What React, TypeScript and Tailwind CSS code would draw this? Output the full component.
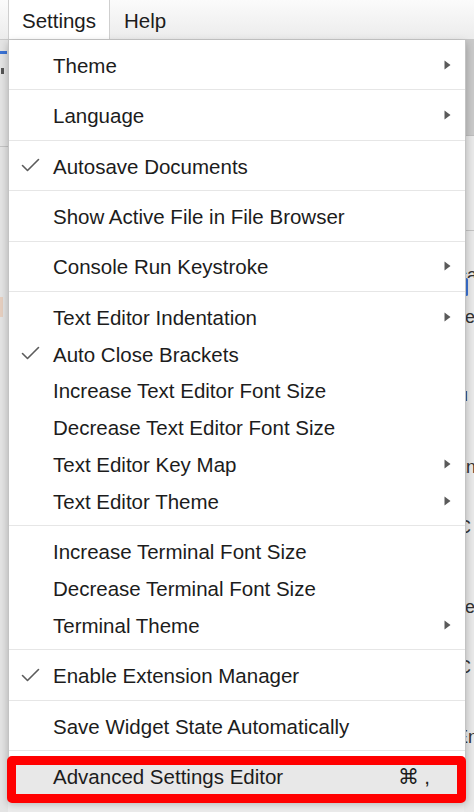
import React from "react";

type Item = { label: string; checked?: boolean; submenu?: boolean; shortcut?: string; active?: boolean };

const sections: Item[][] = [
  [{ label: "Theme", submenu: true }],
  [{ label: "Language", submenu: true }],
  [{ label: "Autosave Documents", checked: true }],
  [{ label: "Show Active File in File Browser" }],
  [{ label: "Console Run Keystroke", submenu: true }],
  [
    { label: "Text Editor Indentation", submenu: true },
    { label: "Auto Close Brackets", checked: true },
    { label: "Increase Text Editor Font Size" },
    { label: "Decrease Text Editor Font Size" },
    { label: "Text Editor Key Map", submenu: true },
    { label: "Text Editor Theme", submenu: true },
  ],
  [
    { label: "Increase Terminal Font Size" },
    { label: "Decrease Terminal Font Size" },
    { label: "Terminal Theme", submenu: true },
  ],
  [{ label: "Enable Extension Manager", checked: true }],
  [{ label: "Save Widget State Automatically" }],
  [{ label: "Advanced Settings Editor", shortcut: "⌘ ,", active: true }],
];

function Check() {
  return (
    <svg width="19" height="14" viewBox="0 0 19 14" className="absolute left-[12px] top-1/2 -translate-y-1/2">
      <path d="M1.5 7.5 L6.5 12.5 L17.5 1.5" fill="none" stroke="#5c5c5c" strokeWidth="1.6" strokeLinecap="round" strokeLinejoin="round" />
    </svg>
  );
}

function Arrow() {
  return (
    <svg width="7" height="10" viewBox="0 0 7 10" className="absolute left-[435px] top-1/2 -translate-y-1/2">
      <path d="M0.5 0.5 L6.5 5 L0.5 9.5 Z" fill="#5a5a5a" />
    </svg>
  );
}

function MenuRow({ item }: { item: Item }) {
  return (
    <div className={`relative flex h-[36.8px] items-center pl-[44px] pr-[35px] pt-[3px] ${item.active ? "bg-[#e8e8e8]" : ""}`}>
      {item.checked && <Check />}
      <span className="flex-1 whitespace-nowrap">{item.label}</span>
      {item.shortcut && <span className="whitespace-nowrap">{item.shortcut}</span>}
      {item.submenu && <Arrow />}
    </div>
  );
}

export default function App() {
  return (
    <div
      className="relative h-[812px] w-[474px] overflow-hidden bg-[#ececec] text-[20.5px] text-[#1c1c1c]"
      style={{ fontFamily: '"Liberation Sans", Arial, sans-serif' }}
    >
      {/* Menu bar */}
      <div className="flex h-[40px] items-stretch border-b border-[#c9c9c9] bg-gradient-to-b from-[#fbfbfb] to-[#ececec]">
        <div className="w-[8px]" />
        <div className="flex w-[102px] items-center justify-center border-x border-[#cfcfcf] bg-white pt-[3px]">Settings</div>
        <div className="flex items-center pl-[14px] pt-[3px]">Help</div>
      </div>

      {/* Page underneath */}
      <div className="flex h-[772px]">
        <div className="flex w-[8px] flex-col bg-[#e4e4e4]">
          <div className="mt-[11px] h-[3px] w-[7px] bg-[#3b73d6]" />
          <div className="mt-[14px] ml-[1px] h-[6px] w-[3px] bg-[#555]" />
          <div className="mt-[72px] h-px w-full bg-[#c4c4c4]" />
          <div className="mt-[150px] h-[20px] w-[3px] bg-[#e6cfc0]" />
        </div>
        <div className="flex-1" />
        <div className="flex w-[10px] flex-col bg-[#e9e9e9] text-[18px] leading-none text-[#333]">
          <div className="h-[95px] bg-[#c9c9c9]" />
          <div className="h-px bg-[#bdbdbd]" />
          <div className="h-[94px]" />
          <div className="h-px bg-[#c4c4c4]" />
          <div className="h-[47px] overflow-hidden pt-[35px] -indent-[6px]">ca</div>
          <div className="ml-[1px] h-[18px] w-[3px] rounded-full bg-[#3b73d6]" />
          <div className="h-[90px] overflow-hidden pt-[12px] -indent-[8px]">ce</div>
          <div className="h-[72px] overflow-hidden -indent-[6px]">u</div>
          <div className="h-[60px] overflow-hidden -indent-[8px]">an</div>
          <div className="h-[80px] overflow-hidden -indent-[6px]">C</div>
          <div className="h-[60px] overflow-hidden -indent-[8px]">ce</div>
          <div className="h-[70px] overflow-hidden -indent-[6px]">C</div>
          <div className="h-[40px] overflow-hidden -indent-[8px]">En</div>
        </div>
      </div>

      {/* Dropdown menu */}
      <div className="absolute left-[8px] top-[40px] w-[458px] border-x border-b border-[#c3c3c3] bg-white shadow-[0_3px_8px_rgba(0,0,0,0.25)]">
        {sections.map((section, i) => (
          <div key={i} className={`py-[6.3px] ${i > 0 ? "border-t border-[#e6e6e6]" : ""}`}>
            {section.map((item) => (
              <MenuRow key={item.label} item={item} />
            ))}
          </div>
        ))}
      </div>

      {/* Highlight annotation */}
      <div className="absolute left-[7px] top-[756px] h-[47px] w-[459px] rounded-[5px] border-[9px] border-[#ff0000]" />
    </div>
  );
}
